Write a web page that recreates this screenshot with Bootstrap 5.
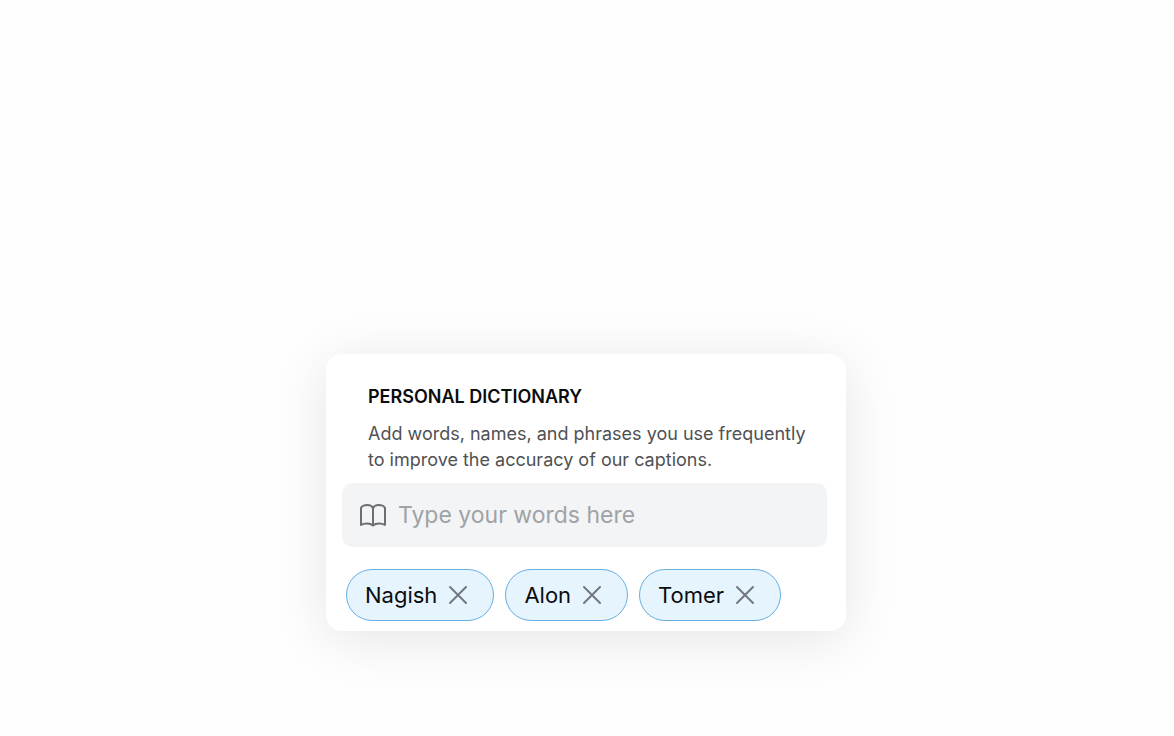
<!DOCTYPE html>
<html lang="en">
<head>
<meta charset="utf-8">
<meta name="viewport" content="width=device-width, initial-scale=1">
<title>Personal dictionary</title>
<link href="https://cdn.jsdelivr.net/npm/bootstrap@5.3.0/dist/css/bootstrap.min.css" rel="stylesheet">
<style>
  body { font-family: Inter, "Liberation Sans", sans-serif; background: #fefefe; color: #0b0c0e; }
  .stage { padding: 24px 17px 105px 15px; }
  .dictionary { max-width: 520px; border-radius: 16px; padding: 31px 19px 10px 16px; box-shadow: 0 8px 56px rgba(0, 0, 0, .1); }
  .intro { padding: 0 8px 10px 26px; }
  .intro h1 { font-size: 18px; line-height: 24px; font-weight: 600; margin-bottom: 12px; }
  .intro p { font-size: 18px; line-height: 26px; color: #505153; }
  .word-box { background: #f2f4f6; border-radius: 10px; height: 64px; padding: 0 18px; gap: 12px; color: #6c6e73; }
  .word-box input { font-size: 23px; line-height: 32px; }
  .word-box input::placeholder { color: #a0a2a5; opacity: 1; }
  .chips { gap: 11px; padding: 22px 4px 0; }
  .chip { height: 52px; padding: 0 25px 0 18px; gap: 11px; font-size: 22px; line-height: 32px; background: #e6f4fe; border: 1px solid #68afe2; }
  .chip button { color: #73777f; line-height: 0; }
</style>
</head>
<body>
<main class="stage min-vh-100 d-flex flex-column justify-content-end align-items-center">
  <section class="dictionary w-100 bg-white" aria-labelledby="title">
    <div class="intro">
      <h1 id="title">PERSONAL DICTIONARY</h1>
      <p class="mb-0">Add words, names, and phrases you use frequently to improve the accuracy of our captions.</p>
    </div>
    <div class="word-box d-flex align-items-center">
      <label for="words" class="d-flex" aria-label="Words">
        <svg width="26" height="24" viewBox="0 0 26 24" fill="none" stroke="currentColor" stroke-width="2" stroke-linejoin="round" stroke-linecap="round" aria-hidden="true"><path d="M13 5C12 3 10 2 7.500 2C4.500 2 2 2.800 1 5V22C2.500 21 4.500 20.500 7 20.500C9.500 20.500 11.500 21 13 22.500C14.500 21 16.500 20.500 19 20.500C21.500 20.500 23.500 21 25 22V5C24 2.800 21.500 2 18.500 2C16 2 14 3 13 5ZM13 5V22"/></svg>
      </label>
      <input id="words" type="text" class="form-control border-0 bg-transparent shadow-none p-0" placeholder="Type your words here">
    </div>
    <div class="chips d-flex flex-wrap">
      <span class="chip d-inline-flex align-items-center rounded-pill">Nagish
        <button type="button" class="border-0 bg-transparent p-0" aria-label="Remove Nagish"><svg width="20" height="20" viewBox="0 0 20 20" fill="none" stroke="currentColor" stroke-width="2" stroke-linecap="round"><path d="M2 2L18 18M18 2L2 18"/></svg></button></span>
      <span class="chip d-inline-flex align-items-center rounded-pill">Alon
        <button type="button" class="border-0 bg-transparent p-0" aria-label="Remove Alon"><svg width="20" height="20" viewBox="0 0 20 20" fill="none" stroke="currentColor" stroke-width="2" stroke-linecap="round"><path d="M2 2L18 18M18 2L2 18"/></svg></button></span>
      <span class="chip d-inline-flex align-items-center rounded-pill">Tomer
        <button type="button" class="border-0 bg-transparent p-0" aria-label="Remove Tomer"><svg width="20" height="20" viewBox="0 0 20 20" fill="none" stroke="currentColor" stroke-width="2" stroke-linecap="round"><path d="M2 2L18 18M18 2L2 18"/></svg></button></span>
    </div>
  </section>
</main>
<script src="https://cdn.jsdelivr.net/npm/bootstrap@5.3.0/dist/js/bootstrap.bundle.min.js"></script>
</body>
</html>
